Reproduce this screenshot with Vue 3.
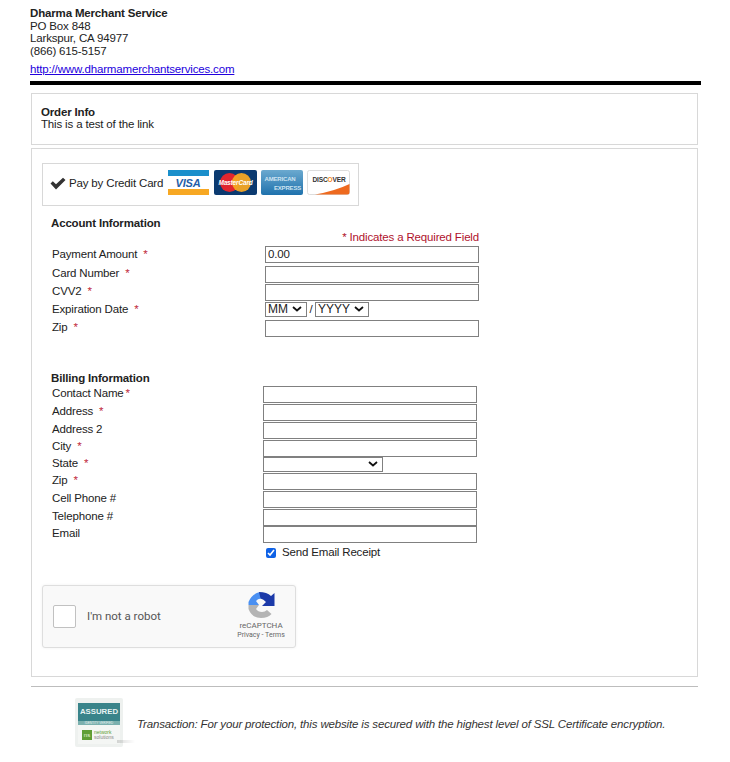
<script setup>
const account = [
  { label: 'Payment Amount', req: true, gap: 6, value: '0.00', h: 20 },
  { label: 'Card Number', req: true, gap: 6, value: '', h: 18 },
  { label: 'CVV2', req: true, gap: 6, value: '', h: 18 },
]
const billingTop = [
  { label: 'Contact Name', req: true, gap: 2, h: 18 },
  { label: 'Address', req: true, gap: 6, h: 18 },
  { label: 'Address 2', req: false, gap: 0, h: 18 },
  { label: 'City', req: true, gap: 6, h: 17, tight: true },
]
const billingBottom = [
  { label: 'Zip', req: true, gap: 6, h: 18 },
  { label: 'Cell Phone #', req: false, gap: 0, h: 18 },
  { label: 'Telephone #', req: false, gap: 0, h: 17 },
  { label: 'Email', req: false, gap: 0, h: 17 },
]
</script>

<template>
  <div class="page">
    <header class="head">
      <strong>Dharma Merchant Service</strong>
      <span>PO Box 848</span>
      <span>Larkspur, CA 94977</span>
      <span>(866) 615-5157</span>
      <a class="site" href="#">http://www.dharmamerchantservices.com</a>
    </header>
    <div class="rule"></div>

    <section class="box order">
      <strong>Order Info</strong>
      <span>This is a test of the link</span>
    </section>

    <section class="box main">
      <div class="pay">
        <svg class="check" width="16" height="13" viewBox="0 0 16 13"><path d="M0.5 6.5 L2.8 4.3 L6 7.2 L13 0.8 L15.5 3 L6 12.5 Z" fill="#333" /></svg>
        <span class="pay-label">Pay by Credit Card</span>
        <svg class="card visa-card" width="41" height="25" viewBox="0 0 41 25">
          <rect width="41" height="25" rx="1" fill="#fff" />
          <rect width="41" height="6" fill="#1a8fcb" />
          <rect y="19" width="41" height="6" fill="#f7a823" />
          <text x="20" y="16.5" text-anchor="middle" class="visa">VISA</text>
        </svg>
        <svg class="card" width="43" height="25" viewBox="0 0 43 25">
          <rect width="43" height="25" rx="2" fill="#0b3a70" />
          <circle cx="15.5" cy="12.5" r="9.5" fill="#e0262f" />
          <circle cx="27.5" cy="12.5" r="9.5" fill="#f5a623" opacity="0.95" />
          <text x="21.5" y="15" text-anchor="middle" class="mc">MasterCard</text>
        </svg>
        <svg class="card" width="42" height="25" viewBox="0 0 42 25">
          <defs>
            <linearGradient id="amex" x1="0" y1="0" x2="0" y2="1">
              <stop offset="0" stop-color="#6ba9cf" />
              <stop offset="1" stop-color="#1f72ad" />
            </linearGradient>
          </defs>
          <rect width="42" height="25" rx="2" fill="url(#amex)" />
          <text x="19" y="10.5" text-anchor="middle" class="amex">AMERICAN</text>
          <text x="26.5" y="20" text-anchor="middle" class="amex">EXPRESS</text>
        </svg>
        <svg class="card" width="43" height="25" viewBox="0 0 43 25">
          <rect x="0.5" y="0.5" width="42" height="24" rx="2" fill="#fff" stroke="#ddd" />
          <path d="M8 24.5 Q28 21 42.5 14 V22.5 Q42.5 24.5 40.5 24.5 Z" fill="#ee6a1f" />
          <text x="22" y="11.5" text-anchor="middle" class="disc">DISC<tspan fill="#f58a1f">O</tspan>VER</text>
        </svg>
      </div>

      <div class="form account">
        <h3 class="section-title">Account Information</h3>
        <p class="required-note">* Indicates a Required Field</p>
        <div v-for="r in account" :key="r.label" class="row" :style="{ height: r.h + 'px' }">
          <label>{{ r.label }}<i v-if="r.req" :style="{ marginLeft: r.gap + 'px' }">*</i></label>
          <input class="field" type="text" :value="r.value" />
        </div>
        <div class="row">
          <label>Expiration Date<i>*</i></label>
          <div class="date">
            <select class="sel mm"><option>MM</option></select>
            <span>/</span>
            <select class="sel yy"><option>YYYY</option></select>
          </div>
        </div>
        <div class="row">
          <label>Zip<i>*</i></label>
          <input class="field" type="text" />
        </div>
      </div>

      <div class="form billing">
        <h3 class="section-title">Billing Information</h3>
        <div v-for="r in billingTop" :key="r.label" class="row" :style="{ height: r.h + 'px' }">
          <label :class="{ tight: r.tight }">{{ r.label }}<i v-if="r.req" :style="{ marginLeft: r.gap + 'px' }">*</i></label>
          <input class="field" type="text" />
        </div>
        <div class="row state-row">
          <label class="tight">State<i>*</i></label>
          <select class="sel state"><option></option></select>
        </div>
        <div v-for="r in billingBottom" :key="r.label" class="row" :style="{ height: r.h + 'px' }">
          <label>{{ r.label }}<i v-if="r.req" :style="{ marginLeft: r.gap + 'px' }">*</i></label>
          <input class="field" type="text" />
        </div>
        <label class="receipt"><input type="checkbox" checked />Send Email Receipt</label>
      </div>

      <div class="captcha">
        <span class="cap-box"></span>
        <span class="cap-text">I'm not a robot</span>
        <div class="cap-logo">
          <svg width="27" height="26" viewBox="0 0 27 26">
            <path d="M0.5 13 V10 Q3.5 2 12 0 L13 6.5 Q9.5 6.5 8 9 L11 13 Z" fill="#4a90f2" />
            <path d="M11 0 Q19 0 23 4 L26.5 1 V14 H14 L18 10 Q15.5 7 12.5 6.5 Z" fill="#1c3aa9" />
            <path d="M0.5 13 H11 L8 17 Q10 20 14 20 Q17 20 19 18 L23.5 22 Q20 26 13 26 Q4 26 0.5 17 Z" fill="#b4b4b4" />
          </svg>
          <span class="cap-name">reCAPTCHA</span>
          <span class="cap-links">Privacy - Terms</span>
        </div>
      </div>
    </section>

    <div class="thin"></div>

    <footer class="foot">
      <div class="badge">
        <div class="badge-top">ASSURED</div>
        <div class="badge-mid">IDENTITY VERIFIED</div>
        <div class="badge-bot"><span class="ns">ns</span><span class="ns-name">network<br /><b>solutions</b></span></div>
      </div>
      <em>Transaction: For your protection, this website is secured with the highest level of SSL Certificate encryption.</em>
    </footer>
  </div>
</template>

<style scoped>
.page {
  width: 671px;
  padding: 7px 0 0 30px;
  font-family: "Liberation Sans", Arial, sans-serif;
  font-size: 11.5px;
  letter-spacing: -0.16px;
  line-height: 12.5px;
  color: #222;
  box-sizing: content-box;
}
.head {
  display: flex;
  flex-direction: column;
}
.site {
  margin-top: 6px;
  color: #2200dd;
  text-decoration: underline;
}
.rule {
  height: 4px;
  margin-top: 5px;
  background: #000;
}
.box {
  border: 1px solid #d8d8d8;
  margin-left: 1px;
  width: 667px;
  box-sizing: border-box;
}
.order {
  display: flex;
  flex-direction: column;
  margin-top: 8px;
  height: 52px;
  padding-left: 9px;
  padding-top: 12px;
}
.main {
  margin-top: 3px;
  height: 529px;
  padding: 14px 0 0 10px;
}
.pay {
  display: flex;
  align-items: center;
  width: 317px;
  height: 43px;
  box-sizing: border-box;
  border: 1px solid #d8d8d8;
  padding-left: 7px;
}
.check { margin: 0 3px 2px 0; flex: none; }
.pay-label { margin: 0 5px 2px 0; white-space: nowrap; }
.card { margin: 0 4px 3px 0; flex: none; }
.visa-card { margin-right: 5px; }
.visa { font: italic bold 11px "Liberation Sans", sans-serif; fill: #1f5ea8; }
.mc { font: italic bold 6.5px "Liberation Sans", sans-serif; fill: #fff; }
.amex { font: bold 6px "Liberation Sans", sans-serif; fill: #cfe4f1; }
.disc { font: bold 6.6px "Liberation Sans", sans-serif; fill: #333; }
.form {
  display: flex;
  flex-direction: column;
}
.section-title {
  margin: 0;
  font-size: inherit;
  font-weight: bold;
  line-height: 14px;
}
.account {
  margin-top: 10px;
  padding-left: 9px;
}
.required-note {
  margin: 0;
  width: 428px;
  text-align: right;
  color: #b0122c;
  line-height: 14px;
  height: 16px;
}
.row {
  display: flex;
  align-items: flex-start;
  height: 18px;
}
.row label {
  width: 214px;
  flex: none;
  padding-left: 1px;
  box-sizing: border-box;
  line-height: 14px;
}
.required-note + .row label { padding-top: 1px; }
.row label.tight { line-height: 12px; }
.row label i {
  font-style: normal;
  color: #c0283c;
  margin-left: 6px;
}
.field {
  width: 214px;
  height: 17px;
  box-sizing: border-box;
  margin: 0;
  border: 1px solid #808080;
  padding: 0 2px;
  font: 11.5px "Liberation Sans", sans-serif;
  letter-spacing: -0.16px;
  color: #222;
  background: #fff;
  outline: 0;
}
.date {
  display: flex;
  align-items: center;
  gap: 2.5px;
  height: 15px;
}
.sel {
  appearance: none;
  margin: 0;
  height: 15px;
  padding: 0 0 0 2px;
  border: 1px solid #808080;
  border-radius: 0;
  font: 12px "Liberation Sans", sans-serif;
  line-height: 13px;
  color: #222;
  background: #fff url("data:image/svg+xml,%3Csvg xmlns='http://www.w3.org/2000/svg' width='10' height='6' viewBox='0 0 10 6'%3E%3Cpath d='M1 1 L5 4.5 L9 1' fill='none' stroke='%23111' stroke-width='1.8'/%3E%3C/svg%3E") no-repeat right 4px center;
}
.mm { width: 42px; }
.yy { width: 54px; }
.billing {
  margin-top: 34px;
  padding-left: 9px;
}
.billing .row label { width: 212px; }
.billing .section-title { height: 15px; margin-top: -1px; }
.state-row { height: 16px; }
.state { width: 120px; height: 15px; }
.receipt {
  display: flex;
  align-items: center;
  margin: 2px 0 0 215px;
  height: 16px;
}
.receipt input {
  margin: 0 6px 0 0;
  width: 10px;
  height: 10px;
  accent-color: #0f62e6;
}
.captcha {
  display: flex;
  align-items: center;
  width: 254px;
  height: 63px;
  margin-top: 24px;
  box-sizing: border-box;
  border: 1px solid #dedede;
  border-radius: 3px;
  background: #f9f9f9;
  box-shadow: 0 0 3px rgba(0, 0, 0, 0.06);
  padding-left: 10px;
  font-family: Roboto, "Liberation Sans", sans-serif;
  letter-spacing: 0;
}
.cap-box {
  width: 23px;
  height: 23px;
  box-sizing: border-box;
  border: 1px solid #c1c1c1;
  border-radius: 2px;
  background: #fff;
  margin-right: 11px;
}
.cap-text { font-size: 11.5px; color: #555; flex: 1; }
.cap-logo {
  width: 60px;
  display: flex;
  flex-direction: column;
  align-items: center;
  margin-right: 4px;
}
.cap-name { font-size: 8px; line-height: 10px; color: #666; margin-top: 3px; }
.cap-links { font-size: 7px; line-height: 9px; color: #666; }
.thin {
  height: 1px;
  margin: 9px 0 0 1px;
  width: 667px;
  background: #bdbdbd;
}
.foot {
  display: flex;
  align-items: center;
  margin-top: 11px;
  padding-left: 45px;
  height: 50px;
}
.foot em { color: #333; margin-top: 4px; }
.badge {
  position: relative;
  width: 48px;
  height: 49px;
  flex: none;
  box-sizing: border-box;
  padding: 5px 3px 3px;
  background: #eef1ef;
  border-radius: 2px;
  display: flex;
  flex-direction: column;
  margin-right: 14px;
  letter-spacing: 0;
}
.badge::after {
  content: "";
  position: absolute;
  left: 42px;
  top: 42px;
  width: 18px;
  height: 3px;
  background: linear-gradient(to right, rgba(0, 0, 0, 0.14), rgba(0, 0, 0, 0));
}
.badge-top {
  background: #39848a;
  color: #e8f3f3;
  font-size: 7.8px;
  font-weight: bold;
  text-align: center;
  line-height: 18px;
}
.badge-mid {
  background: #7bb0ae;
  color: #e8f3f3;
  font-size: 3px;
  line-height: 4px;
  text-align: center;
  white-space: nowrap;
  overflow: hidden;
}
.badge-bot {
  display: flex;
  align-items: center;
  gap: 2px;
  background: #f4f6f4;
  flex: 1;
  padding-left: 4px;
}
.ns {
  width: 10px;
  height: 10px;
  flex: none;
  background: #5f9e35;
  color: #e8f5de;
  font-size: 6px;
  line-height: 10px;
  text-align: center;
}
.ns-name { font-size: 5px; line-height: 5px; color: #5f9e35; }
.ns-name b { font-weight: normal; color: #888; }
</style>
